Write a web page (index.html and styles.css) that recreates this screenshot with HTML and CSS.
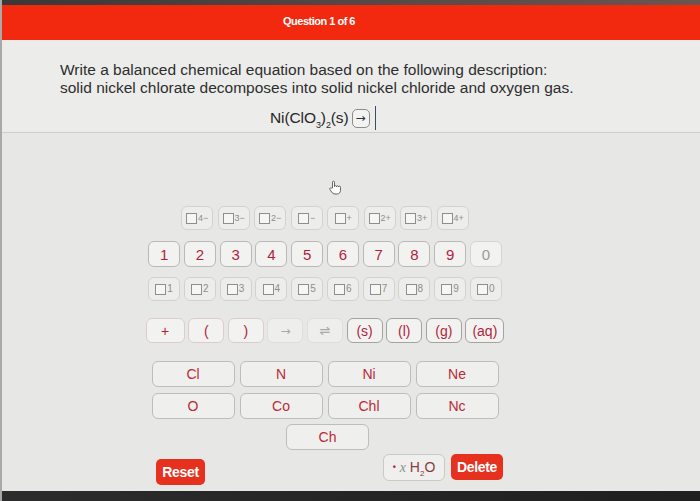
FILE: index.html
```html
<!DOCTYPE html>
<html>
<head>
<meta charset="utf-8">
<link rel="stylesheet" href="styles.css">
</head>
<body>
<div class="page">
  <div class="topstrip"></div>
  <div class="header"><span class="title">Question 1 of 6</span></div>
  <div class="main">
    <p class="question">Write a balanced chemical equation based on the following description:<br>solid nickel chlorate decomposes into solid nickel chloride and oxygen gas.</p>
    <div class="equation">
      <span class="formula">Ni(ClO<sub>3</sub>)<sub>2</sub>(s)</span>
      <span class="arrowbox">→</span>
      <span class="caret"></span>
    </div>
  </div>
  <div class="divider"></div>
  <div class="keypad">
    <div class="row charges">
      <span class="key dim"><i class="sq"></i><sup>4−</sup></span>
      <span class="key dim"><i class="sq"></i><sup>3−</sup></span>
      <span class="key dim"><i class="sq"></i><sup>2−</sup></span>
      <span class="key dim"><i class="sq"></i><sup>−</sup></span>
      <span class="key dim"><i class="sq"></i><sup>+</sup></span>
      <span class="key dim"><i class="sq"></i><sup>2+</sup></span>
      <span class="key dim"><i class="sq"></i><sup>3+</sup></span>
      <span class="key dim"><i class="sq"></i><sup>4+</sup></span>
    </div>
    <div class="row digits">
      <span class="key num">1</span>
      <span class="key num">2</span>
      <span class="key num">3</span>
      <span class="key num">4</span>
      <span class="key num">5</span>
      <span class="key num">6</span>
      <span class="key num">7</span>
      <span class="key num">8</span>
      <span class="key num">9</span>
      <span class="key num off">0</span>
    </div>
    <div class="row subs">
      <span class="key dim"><i class="sq"></i><sub>1</sub></span>
      <span class="key dim"><i class="sq"></i><sub>2</sub></span>
      <span class="key dim"><i class="sq"></i><sub>3</sub></span>
      <span class="key dim"><i class="sq"></i><sub>4</sub></span>
      <span class="key dim"><i class="sq"></i><sub>5</sub></span>
      <span class="key dim"><i class="sq"></i><sub>6</sub></span>
      <span class="key dim"><i class="sq"></i><sub>7</sub></span>
      <span class="key dim"><i class="sq"></i><sub>8</sub></span>
      <span class="key dim"><i class="sq"></i><sub>9</sub></span>
      <span class="key dim"><i class="sq"></i><sub>0</sub></span>
    </div>
    <div class="row symbols">
      <span class="key sym soft wide">+</span>
      <span class="key sym soft">(</span>
      <span class="key sym soft">)</span>
      <span class="key sym ghost">→</span>
      <span class="key sym ghost eq">⇌</span>
      <span class="key sym">(s)</span>
      <span class="key sym">(l)</span>
      <span class="key sym">(g)</span>
      <span class="key sym wide">(aq)</span>
    </div>
    <div class="row elements">
      <span class="key el">Cl</span>
      <span class="key el">N</span>
      <span class="key el">Ni</span>
      <span class="key el">Ne</span>
    </div>
    <div class="row elements r2">
      <span class="key el">O</span>
      <span class="key el">Co</span>
      <span class="key el">Chl</span>
      <span class="key el">Nc</span>
    </div>
    <div class="row elements r3">
      <span class="key el">Ch</span>
    </div>
    <div class="row actions">
      <span class="btn red reset">Reset</span>
      <span class="spacer"></span>
      <span class="key water"><span class="wtext"><b class="dot">•</b> <i class="x">x</i> H<sub>2</sub>O</span></span>
      <span class="btn red delete">Delete</span>
    </div>
  </div>
  <div class="bottomstrip"></div>
  <svg class="pointer" width="14" height="15" viewBox="0 0 14 15">
    <path d="M4.5 8 V2.2 a1 1 0 0 1 2 0 V6.5 a1 1 0 0 1 2 0.2 a1 1 0 0 1 2 0.3 a1 1 0 0 1 2 0.4 V10.5 c0 2 -1.5 3.5 -3.5 3.5 H7 c-1.5 0 -2.5 -0.8 -3.3 -2 L1.8 9.2 a1 1 0 0 1 1.6 -1.1 Z" fill="#ffffff" stroke="#555" stroke-width="0.9"/>
  </svg>
</div>
</body>
</html>
```

FILE: styles.css
```css
body {
  margin: 0;
  background: #2a2a2a;
  font-family: "Liberation Sans", Arial, sans-serif;
}

.page {
  position: relative;
  width: 700px;
  height: 501px;
  overflow: hidden;
  display: flex;
  flex-direction: column;
  background: #e7e7e5;
  border-left: 2px solid #a9a9a7;
  box-sizing: border-box;
}

.topstrip {
  height: 5px;
  flex: none;
  background: linear-gradient(90deg, #3a3838, #5a4a48 60%, #6a5550);
}

.header {
  height: 35px;
  flex: none;
  background: #f2290f;
  display: flex;
  justify-content: center;
  align-items: flex-start;
  padding-right: 64px;
  box-sizing: border-box;
  padding-top: 10px;
}

.title {
  color: #fff;
  font-size: 11px;
  line-height: 13px;
  font-weight: bold;
  letter-spacing: -0.5px;
}

.main {
  background: #ecedeb;
  flex: none;
  padding-top: 21px;
  padding-bottom: 2px;
}

.question {
  margin: 0 0 0 58px;
  font-size: 15.5px;
  line-height: 18px;
  color: #2e2e2e;
}

.equation {
  margin: 9px 0 0 268px;
  display: flex;
  align-items: center;
  height: 24px;
}

.formula {
  font-size: 15.5px;
  line-height: 20px;
  color: #262626;
  letter-spacing: -0.1px;
}

.formula sub {
  font-size: 9px;
  vertical-align: -5px;
  line-height: 0;
}

.arrowbox {
  margin-left: 3px;
  width: 18px;
  height: 19px;
  border: 1px solid #8c8c8c;
  border-radius: 5px;
  box-sizing: border-box;
  display: flex;
  align-items: center;
  justify-content: center;
  font-family: "DejaVu Sans", sans-serif;
  font-size: 12px;
  color: #333;
  background: #f3f3f1;
}

.caret {
  margin-left: 5px;
  width: 1px;
  height: 24px;
  background: #3f4a66;
}

.divider {
  height: 1px;
  flex: none;
  background: #cdcdcb;
}

.keypad {
  width: 360px;
  margin-left: 143px;
  display: flex;
  flex-direction: column;
}

.row {
  display: flex;
  justify-content: center;
}

.key {
  box-sizing: border-box;
  display: flex;
  align-items: center;
  justify-content: center;
  border-radius: 6px;
  background: #f2f2f0;
  border: 1px solid #b9b9b7;
}

.charges {
  margin-top: 73px;
  gap: 4.5px;
}

.charges .key,
.subs .key {
  width: 32px;
  height: 24px;
}

.dim {
  background: #ededeb;
  border-color: #d2d2d0;
  color: #8e8e8e;
}

.sq {
  display: inline-block;
  width: 9px;
  height: 9px;
  border: 1px solid #8e8e8e;
  background: #f6f6f4;
}

.charges sup {
  font-size: 9px;
  line-height: 0;
  vertical-align: 5px;
  margin-left: 1px;
}

.subs sub {
  font-size: 10px;
  line-height: 0;
  vertical-align: -5px;
  margin-left: 1px;
}

.digits {
  margin-top: 11px;
  gap: 3.75px;
}

.digits .key {
  width: 32px;
  height: 26px;
}

.num {
  font-size: 15px;
  color: #b11f3d;
}

.num.off {
  color: #9a9a9a;
  border-color: #d4d4d2;
}

.subs {
  margin-top: 10px;
  gap: 3.75px;
}

.symbols {
  margin-top: 17px;
  gap: 3.6px;
}

.sym {
  width: 36px;
  height: 25px;
  font-size: 14px;
  color: #b11f3d;
  border-color: #a3a3a1;
}

.sym.wide {
  width: 39px;
}

.sym.soft {
  border-color: #dccdcd;
}

.sym.ghost {
  color: #a8a8a8;
  border-color: #dededc;
  background: #eeeeec;
  font-family: "DejaVu Sans", sans-serif;
  font-size: 12px;
}

.sym.eq {
  font-size: 13px;
}

.elements {
  margin-top: 18px;
  gap: 5px;
}

.elements.r2 {
  margin-top: 6px;
}

.elements.r3 {
  margin-top: 5px;
  padding-left: 5px;
}

.el {
  width: 83px;
  height: 26px;
  font-size: 14px;
  color: #bb2a38;
  border: 1.5px solid #bdbdbb;
  background: #efefed;
  border-radius: 6px;
}

.actions {
  margin-top: 4px;
  justify-content: flex-start;
  align-items: flex-start;
  padding-left: 11px;
  padding-right: 2px;
}

.spacer {
  flex: 1;
}

.btn {
  box-sizing: border-box;
  height: 26px;
  display: flex;
  align-items: center;
  justify-content: center;
  border-radius: 5px;
  font-size: 14px;
  font-weight: bold;
  color: #fff;
  letter-spacing: -0.3px;
}

.red {
  background: #e5311d;
}

.reset {
  width: 49px;
  margin-top: 5px;
}

.delete {
  width: 52px;
}

.water {
  width: 62px;
  height: 27px;
  margin-right: 6px;
  font-size: 14px;
  color: #8a3a42;
  border-color: #c9c9c7;
  background: #efefed;
}

.wtext {
  white-space: nowrap;
}

.water .dot {
  font-size: 9px;
  color: #a02a3a;
  vertical-align: 2px;
}

.water .x {
  font-family: "Liberation Serif", serif;
  color: #8e8e8e;
}

.water sub {
  font-size: 8px;
  line-height: 0;
  vertical-align: -4px;
}

.bottomstrip {
  margin-top: auto;
  height: 10px;
  flex: none;
  background: linear-gradient(90deg, #2c2c2c, #1f1f1f);
}

.pointer {
  position: absolute;
  left: 326px;
  top: 180px;
}
```
